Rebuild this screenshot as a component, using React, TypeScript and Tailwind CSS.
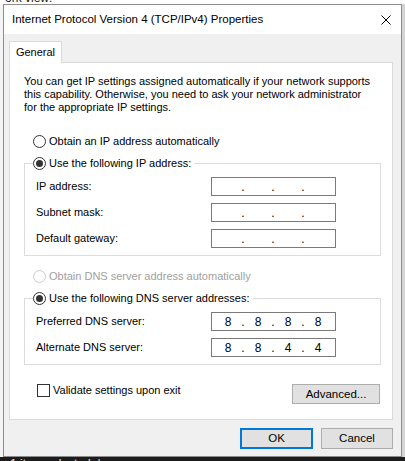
import * as React from "react";

const font = { fontFamily: '"Liberation Sans", Arial, sans-serif' };

function Radio({ checked = false, disabled = false }: { checked?: boolean; disabled?: boolean }) {
  return (
    <span
      className={`flex h-[13px] w-[13px] shrink-0 items-center justify-center rounded-full border bg-white ${
        disabled ? "border-[#cccccc]" : "border-[#333333]"
      }`}
    >
      {checked && <span className="h-[7px] w-[7px] rounded-full bg-[#333333]" />}
    </span>
  );
}

function IpField({ value }: { value?: string[] }) {
  const parts = value ?? ["", "", "", ""];
  return (
    <div className="flex h-[19px] w-[125px] items-center border border-[#7a7a7a] bg-white pl-[4px] text-[12px] leading-none text-black">
      {parts.map((p, i) => (
        <React.Fragment key={i}>
          <span className="flex w-[24px] justify-center">{p}</span>
          {i < 3 && <span className="flex w-[6px] justify-center">.</span>}
        </React.Fragment>
      ))}
    </div>
  );
}

function FieldRow({ label, value }: { label: string; value?: string[] }) {
  return (
    <div className="flex items-center">
      <span className="w-[186px] pl-[11px]">{label}</span>
      <IpField value={value} />
    </div>
  );
}

function GroupBox({ legend, children }: { legend: string; children: React.ReactNode }) {
  return (
    <div className="ml-[14px] w-[357px] border border-[#dcdcdc] pb-[7px]">
      <div className="-mt-[7px] ml-[8px] flex h-[13px] w-fit items-center gap-[3px] bg-white pr-[3px]">
        <Radio checked />
        <span>{legend}</span>
      </div>
      <div className="mt-[7px] flex flex-col gap-[7px]">{children}</div>
    </div>
  );
}

function Btn({ children, primary = false, className = "" }: { children: React.ReactNode; primary?: boolean; className?: string }) {
  return (
    <button
      className={`flex items-center justify-center bg-[#e1e1e1] text-[11.5px] text-black ${
        primary ? "border-2 border-[#0078d7]" : "border border-[#adadad]"
      } ${className}`}
    >
      {children}
    </button>
  );
}

export default function App() {
  return (
    <div className="flex h-[461px] w-[405px] flex-col overflow-hidden bg-white text-[11px] leading-[13px] text-black" style={font}>
      {/* desktop behind the dialog */}
      <div className="h-[4px] overflow-hidden bg-white pl-[5px]">
        <div className="-mt-[8px] text-[12px] text-[#222]">ork view:</div>
      </div>
      <div className="flex flex-1">
        <div className="w-[3px] bg-[#f4f4f4]" />
        <div className="flex w-[399px] flex-col border border-[#8c8c8c] bg-[#f0f0f0]">
          <div className="flex h-[29px] shrink-0 items-center justify-between bg-white pl-[8px] pr-[10px]">
            <span className="text-[11.5px]">Internet Protocol Version 4 (TCP/IPv4) Properties</span>
            <svg width="10" height="10" viewBox="0 0 10 10">
              <path d="M0.5 0.5 L9.5 9.5 M9.5 0.5 L0.5 9.5" stroke="#000" strokeWidth="1" />
            </svg>
          </div>

          <div className="flex flex-col pl-[5px] pr-[8px] pt-[7px]">
            <div className="relative z-10 -mb-[1px] flex h-[22px] w-[53px] items-center justify-center border border-b-0 border-[#d9d9d9] bg-white">
              General
            </div>
            <div className="flex flex-col border border-[#d9d9d9] bg-white pb-[15px] pt-[12px]">
              <p className="whitespace-nowrap pl-[14px]">
                You can get IP settings assigned automatically if your network supports
                <br />
                this capability. Otherwise, you need to ask your network administrator
                <br />
                for the appropriate IP settings.
              </p>

              <div className="ml-[23px] mt-[21px] flex h-[13px] items-center gap-[3px]">
                <Radio />
                <span>Obtain an IP address automatically</span>
              </div>

              <div className="mt-[15px]">
                <GroupBox legend="Use the following IP address:">
                  <FieldRow label="IP address:" />
                  <FieldRow label="Subnet mask:" />
                  <FieldRow label="Default gateway:" />
                </GroupBox>
              </div>

              <div className="ml-[23px] mt-[14px] flex h-[13px] items-center gap-[3px] text-[#a0a0a0]">
                <Radio disabled />
                <span>Obtain DNS server address automatically</span>
              </div>

              <div className="mt-[15px]">
                <GroupBox legend="Use the following DNS server addresses:">
                  <FieldRow label="Preferred DNS server:" value={["8", "8", "8", "8"]} />
                  <FieldRow label="Alternate DNS server:" value={["8", "8", "4", "4"]} />
                </GroupBox>
              </div>

              <div className="mt-[19px] flex items-start justify-between pl-[27px] pr-[12px]">
                <label className="flex h-[13px] items-center gap-[3px]">
                  <span className="h-[13px] w-[13px] border border-[#333333] bg-white" />
                  <span>Validate settings upon exit</span>
                </label>
                <Btn className="h-[20px] w-[88px]">Advanced...</Btn>
              </div>
            </div>

            <div className="mt-[8px] flex justify-end gap-[8px] pb-[7px]">
              <Btn primary className="h-[21px] w-[73px]">OK</Btn>
              <Btn className="h-[21px] w-[72px]">Cancel</Btn>
            </div>
          </div>
        </div>
        <div className="w-[3px] bg-[#d4d4d4]" />
      </div>
      <div className="h-[4px] shrink-0 overflow-hidden bg-[#1c1c1c] pl-[10px]">
        <div className="mt-[1px] text-[12px] text-[#e0e0e0]">1 item selected &nbsp;|</div>
      </div>
    </div>
  );
}
